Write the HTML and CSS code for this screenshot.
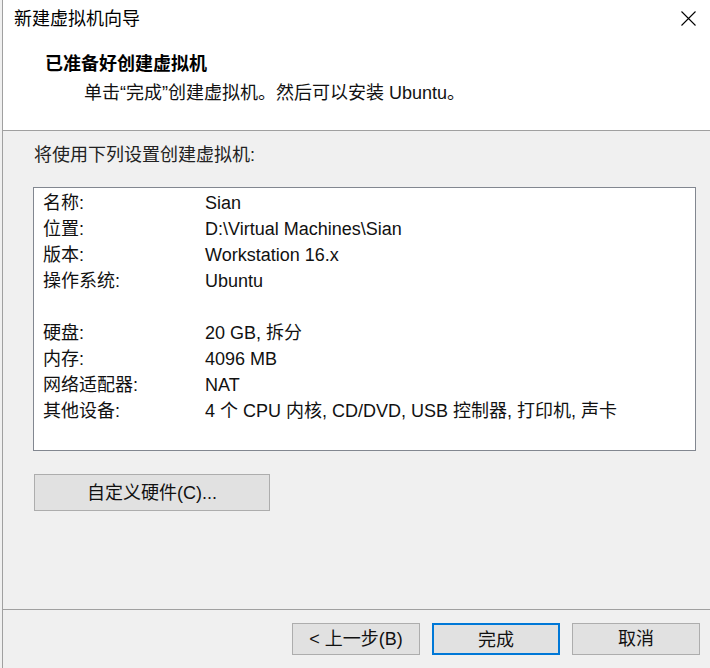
FILE: index.html
```html
<!DOCTYPE html>
<html lang="zh-CN">
<head>
<meta charset="utf-8">
<title>新建虚拟机向导</title>
<link rel="stylesheet" href="styles.css">
</head>
<body>
<div class="window">
  <div class="header">
    <div class="title">新建虚拟机向导</div>
    <svg class="close" width="15" height="15" viewBox="0 0 15 15"><path d="M0.5 0.5L14.5 14.5M14.5 0.5L0.5 14.5" stroke="#000" stroke-width="1.1" fill="none"/></svg>
    <div class="heading">已准备好创建虚拟机</div>
    <div class="subtitle">单击“完成”创建虚拟机。然后可以安装 Ubuntu。</div>
  </div>
  <div class="main">
    <div class="label">将使用下列设置创建虚拟机:</div>
    <div class="summary">
      <div class="row"><span>名称:</span><span>Sian</span></div>
      <div class="row"><span>位置:</span><span>D:\Virtual Machines\Sian</span></div>
      <div class="row"><span>版本:</span><span>Workstation 16.x</span></div>
      <div class="row"><span>操作系统:</span><span>Ubuntu</span></div>
      <div class="row blank"></div>
      <div class="row"><span>硬盘:</span><span>20 GB, 拆分</span></div>
      <div class="row"><span>内存:</span><span>4096 MB</span></div>
      <div class="row"><span>网络适配器:</span><span>NAT</span></div>
      <div class="row"><span>其他设备:</span><span>4 个 CPU 内核, CD/DVD, USB 控制器, 打印机, 声卡</span></div>
    </div>
    <button class="btn custom">自定义硬件(C)...</button>
  </div>
  <div class="footer">
    <button class="btn">&lt; 上一步(B)</button>
    <button class="btn primary">完成</button>
    <button class="btn">取消</button>
  </div>
</div>
</body>
</html>
```
FILE: styles.css
```css
html, body {
  margin: 0;
  padding: 0;
}
body {
  width: 710px;
  height: 668px;
  overflow: hidden;
  background: #f0f0f0;
  font-family: "Liberation Sans", "Noto Sans CJK SC", sans-serif;
  font-size: 18px;
  color: #111;
}
.window {
  margin-left: 2px;
  border-left: 1px solid #a0a0a0;
  height: 668px;
  box-sizing: border-box;
  display: flex;
  flex-direction: column;
}
.header {
  position: relative;
  background: #fff;
  height: 131px;
  box-sizing: border-box;
  border-bottom: 1px solid #a0a0a0;
  padding-top: 7px;
}
.title {
  line-height: 24px;
  margin-left: 11px;
  color: #000;
}
.close {
  position: absolute;
  top: 11px;
  right: 14px;
}
.heading {
  margin-top: 20px;
  padding-left: 42px;
  line-height: 26px;
  font-weight: bold;
  color: #000;
}
.subtitle {
  margin-top: 3px;
  padding-left: 81px;
  line-height: 26px;
}
.main {
  padding-left: 30px;
  display: flex;
  flex-direction: column;
  align-items: flex-start;
}
.label {
  margin-top: 11px;
  padding-left: 1px;
  line-height: 26px;
  color: #222;
}
.summary {
  margin-top: 19px;
  width: 663px;
  height: 264px;
  box-sizing: border-box;
  border: 1px solid #828790;
  background: #fff;
  padding: 2px 0 0 9px;
}
.row {
  display: grid;
  grid-template-columns: 162px 1fr;
  line-height: 26px;
  height: 26px;
  white-space: nowrap;
}
.btn {
  font: inherit;
  color: #111;
  background: #e1e1e1;
  border: 1px solid #adadad;
  box-sizing: border-box;
  width: 128px;
  height: 32px;
  padding: 0;
  line-height: 30px;
}
.custom {
  margin-top: 23px;
  margin-left: 1px;
  width: 236px;
  height: 37px;
}
.primary {
  border: 2px solid #0078d7;
}
.footer {
  margin-top: auto;
  height: 59px;
  box-sizing: border-box;
  border-top: 1px solid #a0a0a0;
  display: flex;
  justify-content: flex-end;
  gap: 12px;
  padding: 13px 10px 0 0;
}
```
